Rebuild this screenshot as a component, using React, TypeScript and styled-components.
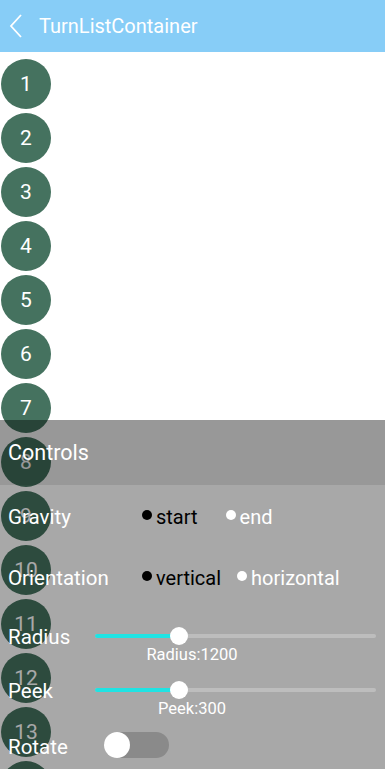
import React from "react";
import styled, { createGlobalStyle } from "styled-components";

const GlobalStyle = createGlobalStyle`
  html, body {
    margin: 0;
    padding: 0;
    background: #ffffff;
    font-family: Roboto, "Noto Sans", "Liberation Sans", sans-serif;
  }
  #root {
    width: 385px;
    height: 769px;
    overflow: hidden;
  }
`;

const Page = styled.div`
  position: relative;
  width: 385px;
  height: 769px;
  overflow: hidden;
  background: #ffffff;
`;

const Header = styled.div`
  display: flex;
  align-items: center;
  gap: 13px;
  height: 52px;
  padding-left: 8px;
  background: #87cdf7;
  color: #ffffff;
  font-size: 20px;
  box-sizing: border-box;
`;

const BackIcon = styled.svg`
  width: 18px;
  height: 26px;
  flex-shrink: 0;
`;

const List = styled.div`
  display: flex;
  flex-direction: column;
  gap: 4px;
  padding: 7px 0 0 1px;
`;

const Circle = styled.div`
  display: flex;
  align-items: center;
  justify-content: center;
  width: 50px;
  height: 50px;
  border-radius: 50%;
  background: #45725f;
  color: #ffffff;
  font-size: 21px;
  flex-shrink: 0;
`;

// the controls sheet floats over the bottom of the list
const Panel = styled.div`
  position: absolute;
  left: 0;
  right: 0;
  top: 420px;
  bottom: 0;
  display: flex;
  flex-direction: column;
  background: rgba(0, 0, 0, 0.34);
  color: #ffffff;
`;

const PanelTitle = styled.div`
  display: flex;
  align-items: center;
  height: 65px;
  padding-left: 8px;
  background: rgba(0, 0, 0, 0.09);
  font-size: 21.5px;
  box-sizing: border-box;
`;

const Row = styled.div<{ $h: number }>`
  display: grid;
  grid-template-columns: 134px 1fr;
  align-items: center;
  height: ${(p) => p.$h}px;
  padding-left: 8px;
`;

const Label = styled.div`
  font-size: 20.5px;
  line-height: 22px;
  white-space: nowrap;
`;

const RadioGroup = styled.div<{ $gap: number }>`
  display: flex;
  align-items: center;
  gap: ${(p) => p.$gap}px;
`;

const Radio = styled.div<{ $on?: boolean }>`
  display: flex;
  align-items: center;
  gap: 4px;
  font-size: 20px;
  color: ${(p) => (p.$on ? "#000000" : "#ffffff")};
  &::before {
    content: "";
    width: 10px;
    height: 10px;
    border-radius: 50%;
    background: ${(p) => (p.$on ? "#000000" : "#ffffff")};
    margin-top: -4px;
  }
`;

const SliderRow = styled.div<{ $top: number }>`
  display: grid;
  grid-template-columns: 87px 1fr;
  align-items: start;
  padding: ${(p) => p.$top}px 9px 0 8px;
`;

const SliderLabel = styled(Label)`
  margin-top: 0px;
`;

const SliderBox = styled.div`
  display: flex;
  flex-direction: column;
`;

const Track = styled.div`
  position: relative;
  height: 20px;
  &::before {
    content: "";
    position: absolute;
    left: 0;
    right: 0;
    top: 8px;
    height: 4px;
    border-radius: 2px;
    background: #bdbdbd;
  }
`;

const Fill = styled.div`
  position: absolute;
  left: 0;
  top: 8px;
  height: 4px;
  border-radius: 2px;
  background: #1fe3e3;
`;

const Thumb = styled.div`
  position: absolute;
  top: 1px;
  width: 18px;
  height: 18px;
  margin-left: -9px;
  border-radius: 50%;
  background: #ffffff;
`;

const ValueText = styled.div`
  width: 194px;
  text-align: center;
  font-size: 16.5px;
  line-height: 18px;
`;

const ToggleRow = styled.div`
  display: grid;
  grid-template-columns: 96px 1fr;
  align-items: center;
  padding: 14px 0 0 8px;
`;

const ToggleLabel = styled(Label)`
  margin-top: 3px;
`;

const Toggle = styled.div<{ $on?: boolean }>`
  display: flex;
  justify-content: ${(p) => (p.$on ? "flex-end" : "flex-start")};
  width: 65px;
  height: 26px;
  border-radius: 13px;
  background: #8a8a8a;
  &::before {
    content: "";
    width: 26px;
    height: 26px;
    border-radius: 50%;
    background: #ffffff;
  }
`;

const Slider = ({ pct, label, value }: { pct: number; label: string; value: string }) => (
  <SliderBox>
    <Track>
      <Fill style={{ width: `${pct}%` }} />
      <Thumb style={{ left: `${pct}%` }} />
    </Track>
    <ValueText>
      {label}:{value}
    </ValueText>
  </SliderBox>
);

export default function App() {
  const items = Array.from({ length: 14 }, (_, i) => i + 1);

  return (
    <Page>
      <GlobalStyle />
      <Header>
        <BackIcon viewBox="0 0 18 26">
          <path d="M13 2 L3 13 L13 24" fill="none" stroke="#ffffff" strokeWidth="1.8" />
        </BackIcon>
        TurnListContainer
      </Header>

      <List>
        {items.map((n) => (
          <Circle key={n}>{n}</Circle>
        ))}
      </List>

      <Panel>
        <PanelTitle>Controls</PanelTitle>

        <Row $h={64}>
          <Label>Gravity</Label>
          <RadioGroup $gap={28}>
            <Radio $on>start</Radio>
            <Radio>end</Radio>
          </RadioGroup>
        </Row>

        <Row $h={58}>
          <Label>Orientation</Label>
          <RadioGroup $gap={16}>
            <Radio $on>vertical</Radio>
            <Radio>horizontal</Radio>
          </RadioGroup>
        </Row>

        <SliderRow $top={19}>
          <SliderLabel>Radius</SliderLabel>
          <Slider pct={30} label="Radius" value="1200" />
        </SliderRow>

        <SliderRow $top={16}>
          <SliderLabel>Peek</SliderLabel>
          <Slider pct={30} label="Peek" value="300" />
        </SliderRow>

        <ToggleRow>
          <ToggleLabel>Rotate</ToggleLabel>
          <Toggle />
        </ToggleRow>
      </Panel>
    </Page>
  );
}
